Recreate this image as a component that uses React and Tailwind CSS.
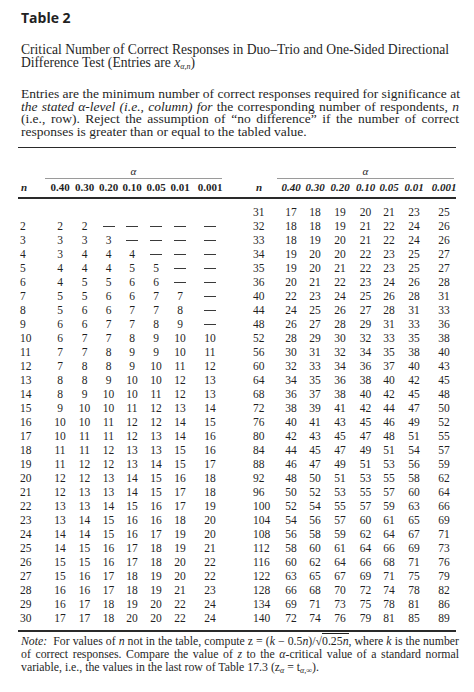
import React from "react";

const left = [
  [2, "2 2 — — — — —"],
  [3, "3 3 3 — — — —"],
  [4, "3 4 4 4 — — —"],
  [5, "4 4 4 5 5 — —"],
  [6, "4 5 5 6 6 — —"],
  [7, "5 5 6 6 7 7 —"],
  [8, "5 6 6 7 7 8 —"],
  [9, "6 6 7 7 8 9 —"],
  [10, "6 7 7 8 9 10 10"],
  [11, "7 7 8 9 9 10 11"],
  [12, "7 8 8 9 10 11 12"],
  [13, "8 8 9 10 10 12 13"],
  [14, "8 9 10 10 11 12 13"],
  [15, "9 10 10 11 12 13 14"],
  [16, "10 10 11 12 12 14 15"],
  [17, "10 11 11 12 13 14 16"],
  [18, "11 11 12 13 13 15 16"],
  [19, "11 12 12 13 14 15 17"],
  [20, "12 12 13 14 15 16 18"],
  [21, "12 13 13 14 15 17 18"],
  [22, "13 13 14 15 16 17 19"],
  [23, "13 14 15 16 16 18 20"],
  [24, "14 14 15 16 17 19 20"],
  [25, "14 15 16 17 18 19 21"],
  [26, "15 15 16 17 18 20 22"],
  [27, "15 16 17 18 19 20 22"],
  [28, "16 16 17 18 19 21 23"],
  [29, "16 17 18 19 20 22 24"],
  [30, "17 17 18 20 20 22 24"],
];

const right = [
  [31, "17 18 19 20 21 23 25"],
  [32, "18 18 19 21 22 24 26"],
  [33, "18 19 20 21 22 24 26"],
  [34, "19 20 20 22 23 25 27"],
  [35, "19 20 21 22 23 25 27"],
  [36, "20 21 22 23 24 26 28"],
  [40, "22 23 24 25 26 28 31"],
  [44, "24 25 26 27 28 31 33"],
  [48, "26 27 28 29 31 33 36"],
  [52, "28 29 30 32 33 35 38"],
  [56, "30 31 32 34 35 38 40"],
  [60, "32 33 34 36 37 40 43"],
  [64, "34 35 36 38 40 42 45"],
  [68, "36 37 38 40 42 45 48"],
  [72, "38 39 41 42 44 47 50"],
  [76, "40 41 43 45 46 49 52"],
  [80, "42 43 45 47 48 51 55"],
  [84, "44 45 47 49 51 54 57"],
  [88, "46 47 49 51 53 56 59"],
  [92, "48 50 51 53 55 58 62"],
  [96, "50 52 53 55 57 60 64"],
  [100, "52 54 55 57 59 63 66"],
  [104, "54 56 57 60 61 65 69"],
  [108, "56 58 59 62 64 67 71"],
  [112, "58 60 61 64 66 69 73"],
  [116, "60 62 64 66 68 71 76"],
  [122, "63 65 67 69 71 75 79"],
  [128, "66 68 70 72 74 78 82"],
  [134, "69 71 73 75 78 81 86"],
  [140, "72 74 76 79 81 85 89"],
];

const alphas = ["0.40", "0.30", "0.20", "0.10", "0.05", "0.01", "0.001"];

const LCOLS = "grid grid-cols-[28px_24px_25px_23px_24px_24px_24px_36px]";
const RCOLS = "grid grid-cols-[26px_24px_24px_26px_25px_22px_28px_32px]";

function Cell({ v }) {
  if (v === "—") {
    return (
      <div className="flex flex-row items-center justify-center h-[14px]">
        <span className="inline-block w-[12px] h-0 border-t-[1.5px] border-[#3a3a3a]" />
      </div>
    );
  }
  return <div className="text-center">{v}</div>;
}

function Rows({ data, cols, blankFirst }) {
  return (
    <div className={`${cols} auto-rows-[14px] leading-[14px] text-[11.5px]`}>
      {blankFirst && <div className="col-span-8" />}
      {data.map(([n, vals]) => (
        <React.Fragment key={n}>
          <div className="text-left">{n}</div>
          {vals.split(" ").map((v, i) => (
            <Cell key={i} v={v} />
          ))}
        </React.Fragment>
      ))}
    </div>
  );
}

function Head({ cols, italic, alphaMl, nPad }) {
  return (
    <div>
      <div className={`${alphaMl} w-[177px] h-[12px] leading-[12px] text-[11px] italic text-center`}>α</div>
      <div className={`${alphaMl} w-[177px] h-px bg-[#9a9a9a] mt-[1px]`} />
      <div
        className={`${cols} h-[14px] leading-[14px] text-[11px] font-bold mt-[1px] ${
          italic ? "italic" : ""
        }`}
      >
        <div className={`italic text-left ${nPad}`}>n</div>
        {alphas.map((a) => (
          <div key={a} className="text-center whitespace-nowrap">
            {a}
          </div>
        ))}
      </div>
    </div>
  );
}

const J = "block text-justify [text-align-last:justify] whitespace-nowrap";
const SUB = "inline-block leading-none relative top-[2px] text-[8px]";

export default function App() {
  return (
    <div
      className="w-[474px] h-[692px] bg-white text-[#1f1f1f] pl-[21px] pr-[15px] pt-[10px] overflow-hidden"
      style={{ fontFamily: '"Liberation Serif", "Times New Roman", serif' }}
    >
      <div
        className="text-[14px] leading-[16px] font-bold text-[#222]"
        style={{ fontFamily: '"Open Sans", "Noto Sans", sans-serif' }}
      >
        Table 2
      </div>

      <div className="mt-[16.5px] text-[13.6px] leading-[13px]">
        <span className="block whitespace-nowrap">
          Critical Number of Correct Responses in Duo–Trio and One-Sided Directional
        </span>
        <span className="block whitespace-nowrap">
          Difference Test (Entries are{" "}
          <span className="italic">
            x<span className={SUB}>α,n</span>
          </span>
          )
        </span>
      </div>

      <div className="mt-[19.5px] text-[13.5px] leading-[12.7px]">
        <span className={J}>
          Entries are the minimum number of correct responses required for significance at
        </span>
        <span className={J}>
          <span className="italic">the stated α-level (i.e., column) for</span> the corresponding number of
          respondents, <span className="italic">n</span>
        </span>
        <span className={J}>
          (i.e., row). Reject the assumption of “no difference” if the number of correct
        </span>
        <span className="block whitespace-nowrap">responses is greater than or equal to the tabled value.</span>
      </div>

      <div className="mt-[8px] h-[1.5px] bg-[#2a2a2a] ml-[-3px] mr-[3px]" />

      <div className="mt-[17px] flex">
        <div className="ml-[-1px]">
          <Head cols={LCOLS} italic={false} alphaMl="ml-[25px]" nPad="pl-[1px]" />
        </div>
        <div className="ml-[25px]">
          <Head cols={RCOLS} italic={true} alphaMl="ml-[24px]" nPad="pl-[3px]" />
        </div>
      </div>

      <div className="mt-[3px] h-[2px] bg-[#2a2a2a] ml-[-3px] mr-[3px]" />

      <div className="mt-[6px] flex">
        <div className="ml-[-1px] w-[208px]">
          <Rows data={left} cols={LCOLS} blankFirst />
        </div>
        <div className="ml-[25px] w-[207px]">
          <Rows data={right} cols={RCOLS} />
        </div>
      </div>

      <div className="mt-[5px] h-[2px] bg-[#2a2a2a] ml-[-3px] mr-[3px]" />

      <div className="mt-[3px] text-[11.8px] leading-[12.7px]">
        <span className={J}>
          <span className="italic">Note:</span>&nbsp;&nbsp;For values of <span className="italic">n</span> not in
          the table, compute z = (<span className="italic">k</span> − 0.5<span className="italic">n</span>)/√
          <span className="border-t border-[#1f1f1f]">
            0.25<span className="italic">n</span>
          </span>
          , where <span className="italic">k</span> is the number
        </span>
        <span className={J}>
          of correct responses. Compare the value of <span className="italic">z</span> to the{" "}
          <span className="italic">α</span>-critical value of a standard normal
        </span>
        <span className="block whitespace-nowrap">
          variable, i.e., the values in the last row of Table 17.3 (z
          <span className={`${SUB} italic`}>α</span> = t<span className={`${SUB} italic`}>α,∞</span>).
        </span>
      </div>
    </div>
  );
}
